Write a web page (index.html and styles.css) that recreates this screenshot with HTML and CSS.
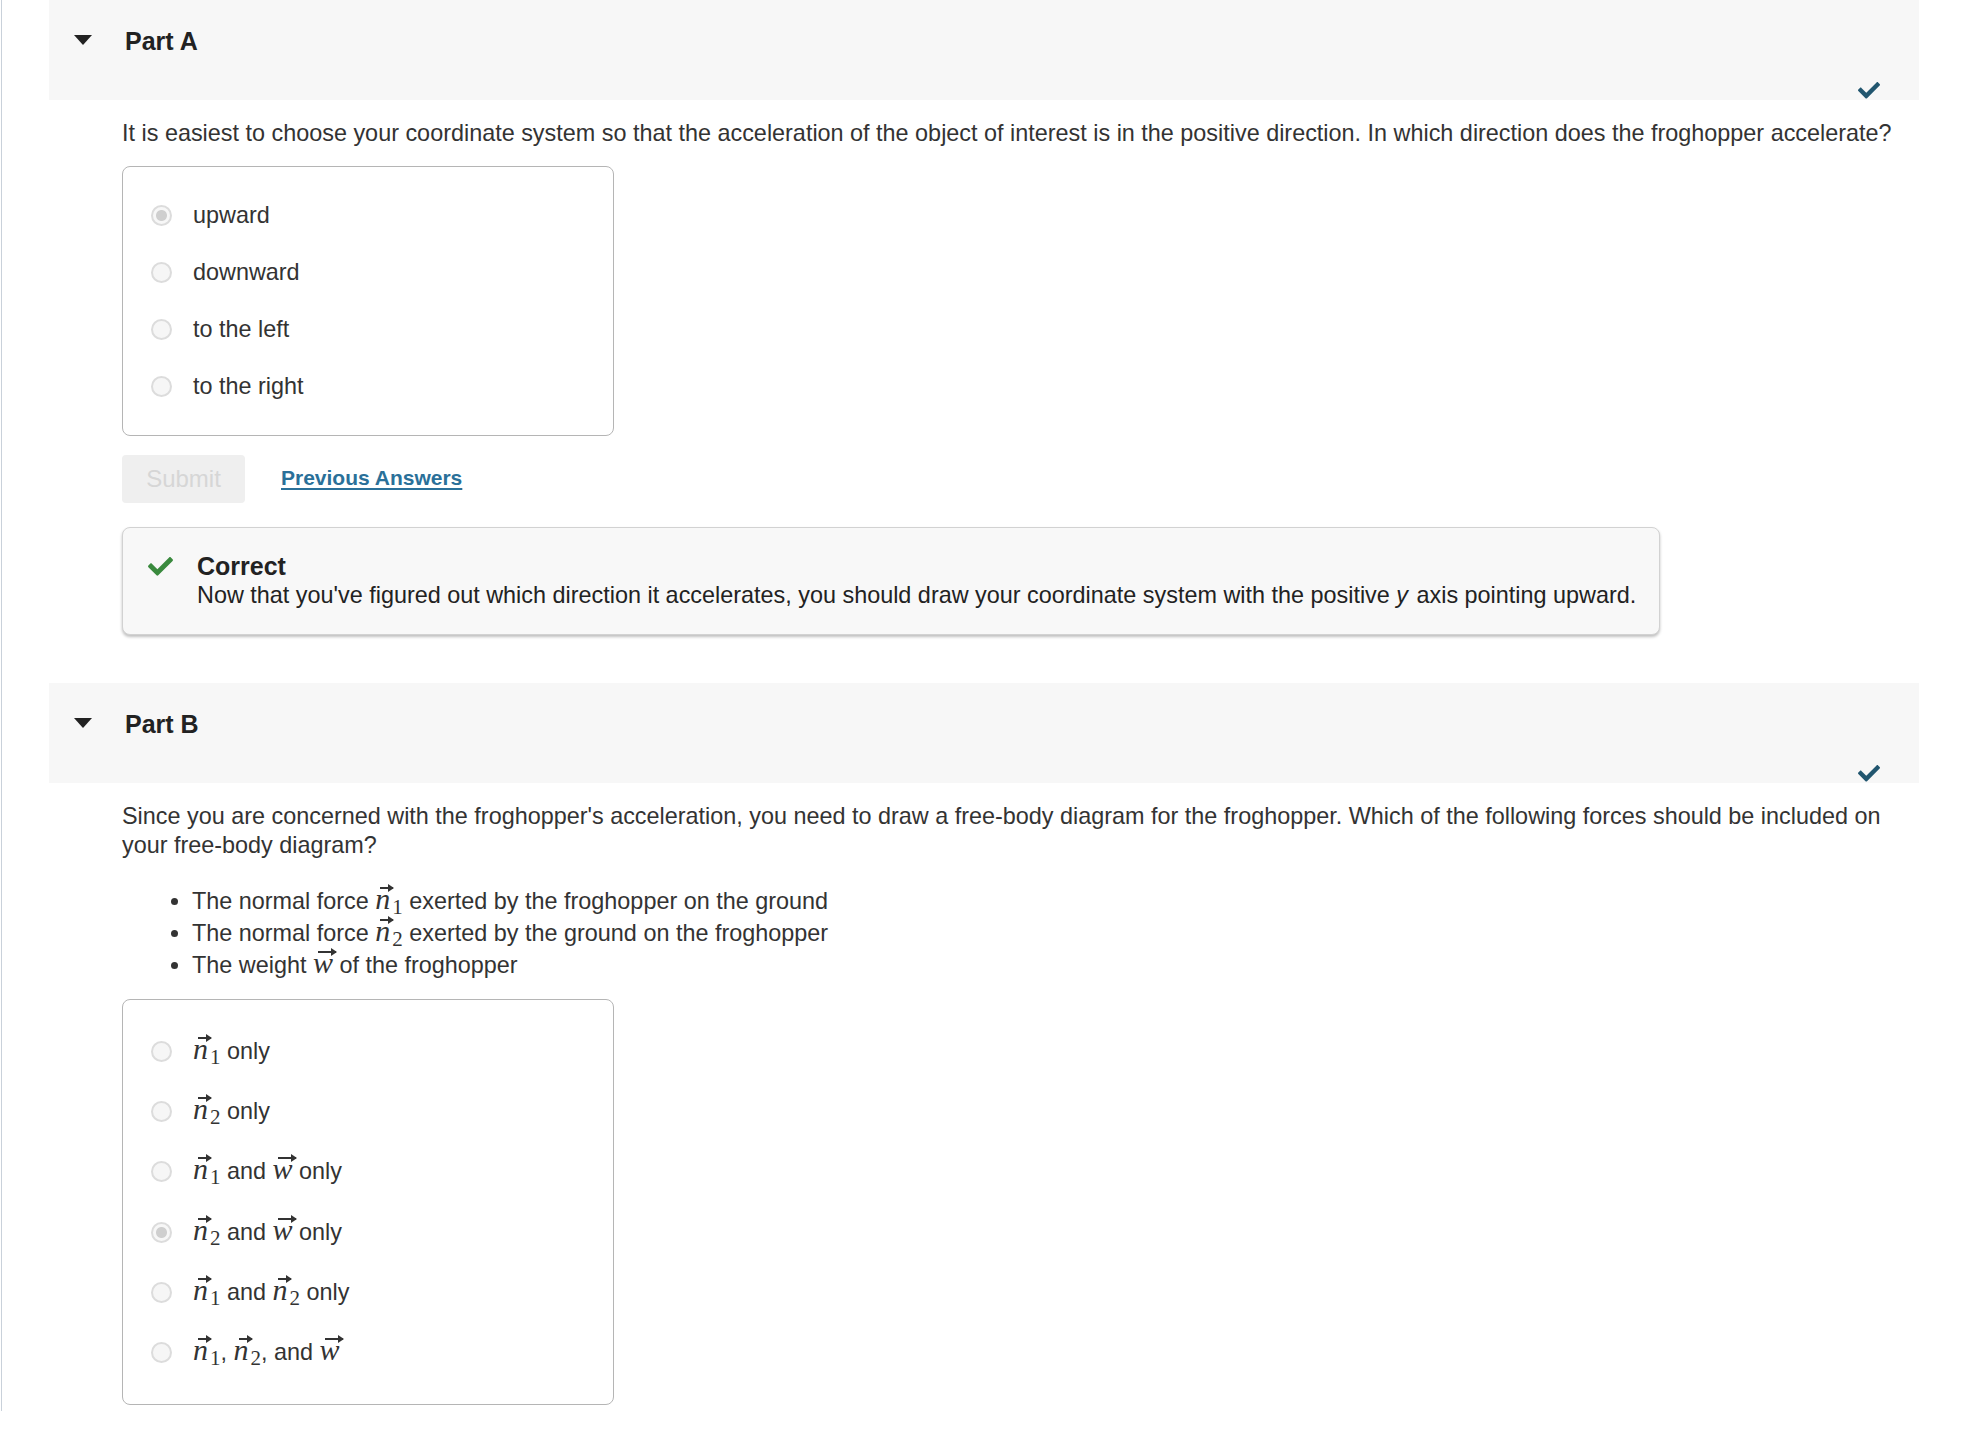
FILE: index.html
```html
<!DOCTYPE html>
<html>
    <head>
        <meta charset="utf-8" />
        <title>Froghopper - Parts A and B</title>
        <meta name="viewport" content="width=device-width, initial-scale=1" />
        <link rel="stylesheet" href="styles.css">
    </head>

    <body>
        <div class="page">
            <section class="part">
                <div class="part-head">
                    <span class="caret"></span>
                    <h2>Part A</h2>
                    <svg class="done" viewBox="0 0 512 400"><path d="M174 390L8 224c-10-10-10-26 0-36l36-36c10-10 26-10 36 0l112 112L432 24c10-10 26-10 36 0l36 36c10 10 10 26 0 36L210 390c-10 10-26 10-36 0z"/></svg>
                </div>
                <div class="part-body">
                    <p class="prompt">It is easiest to choose your coordinate system so that the acceleration of the object of interest is in the positive direction. In which direction does the froghopper accelerate?</p>

                    <div class="choices">
                        <label class="choice"><span class="radio checked"></span><span class="label">upward</span></label>
                        <label class="choice"><span class="radio"></span><span class="label">downward</span></label>
                        <label class="choice"><span class="radio"></span><span class="label">to the left</span></label>
                        <label class="choice"><span class="radio"></span><span class="label">to the right</span></label>
                    </div>

                    <div class="actions">
                        <button class="submit" disabled>Submit</button>
                        <a class="prev" href="#">Previous Answers</a>
                    </div>

                    <div class="feedback">
                        <svg class="ok" viewBox="0 0 512 400"><path d="M174 390L8 224c-10-10-10-26 0-36l36-36c10-10 26-10 36 0l112 112L432 24c10-10 26-10 36 0l36 36c10 10 10 26 0 36L210 390c-10 10-26 10-36 0z"/></svg>
                        <div class="feedback-text">
                            <strong>Correct</strong>
                            <p>Now that you've figured out which direction it accelerates, you should draw your coordinate system with the positive <i class="var">y</i> axis pointing upward.</p>
                        </div>
                    </div>
                </div>
            </section>

            <section class="part part-b">
                <div class="part-head">
                    <span class="caret"></span>
                    <h2>Part B</h2>
                    <svg class="done" viewBox="0 0 512 400"><path d="M174 390L8 224c-10-10-10-26 0-36l36-36c10-10 26-10 36 0l112 112L432 24c10-10 26-10 36 0l36 36c10 10 10 26 0 36L210 390c-10 10-26 10-36 0z"/></svg>
                </div>
                <div class="part-body">
                    <p class="prompt">Since you are concerned with the froghopper's acceleration, you need to draw a free-body diagram for the froghopper. Which of the following forces should be included on your free-body diagram?</p>

                    <ul class="forces">
                        <li>The normal force <span class="vec">n</span><sub class="idx">1</sub> exerted by the froghopper on the ground</li>
                        <li>The normal force <span class="vec">n</span><sub class="idx">2</sub> exerted by the ground on the froghopper</li>
                        <li>The weight <span class="vec">w</span> of the froghopper</li>
                    </ul>

                    <div class="choices tall">
                        <label class="choice"><span class="radio"></span><span class="label"><span class="vec">n</span><sub class="idx">1</sub> only</span></label>
                        <label class="choice"><span class="radio"></span><span class="label"><span class="vec">n</span><sub class="idx">2</sub> only</span></label>
                        <label class="choice"><span class="radio"></span><span class="label"><span class="vec">n</span><sub class="idx">1</sub> and <span class="vec">w</span> only</span></label>
                        <label class="choice"><span class="radio checked"></span><span class="label"><span class="vec">n</span><sub class="idx">2</sub> and <span class="vec">w</span> only</span></label>
                        <label class="choice"><span class="radio"></span><span class="label"><span class="vec">n</span><sub class="idx">1</sub> and <span class="vec">n</span><sub class="idx">2</sub> only</span></label>
                        <label class="choice"><span class="radio"></span><span class="label"><span class="vec">n</span><sub class="idx">1</sub>, <span class="vec">n</span><sub class="idx">2</sub>, and <span class="vec">w</span></span></label>
                    </div>
                </div>
            </section>
        </div>
    </body>
</html>
```

FILE: styles.css
```css
html,
body {
    margin: 0;
    padding: 0;
    background: #fff;
    color: #333;
    font-family: 'Liberation Sans', Arial, sans-serif;
    font-size: 23.4px;
    line-height: 29px;
}

.page {
    margin-left: 1px;
    border-left: 1px solid #c9d1da;
    padding: 0 51px 6px 47px;
}

.part-b {
    margin-top: 48px;
}

.part-head {
    display: flex;
    align-items: flex-start;
    box-sizing: border-box;
    height: 100px;
    padding: 0 39px 0 25px;
    background: #f7f7f7;
}

.caret {
    width: 0;
    height: 0;
    margin-top: 35px;
    border-left: 9px solid transparent;
    border-right: 9px solid transparent;
    border-top: 10px solid #222;
}

.part-head h2 {
    margin: 26px 0 0 33px;
    font-size: 25px;
    line-height: 30px;
    color: #222;
}

.done {
    align-self: flex-end;
    margin: 0 0 1px auto;
    width: 22px;
    height: 18px;
    fill: #21566f;
}

.part-body {
    padding-left: 73px;
}

.prompt {
    margin: 19px 0 0;
}

.choices {
    box-sizing: border-box;
    width: 492px;
    margin-top: 18px;
    padding: 20px 0;
    border: 1px solid #b5b5b5;
    border-radius: 8px;
}

.choice {
    display: flex;
    align-items: center;
    height: 57px;
    padding-left: 28px;
}

.choices.tall {
    margin-top: 18px;
    padding: 21px 0 21px;
}

.choices.tall .choice {
    height: 60.3px;
}

.radio {
    box-sizing: border-box;
    flex: none;
    width: 21px;
    height: 21px;
    margin-right: 21px;
    border: 2px solid #dcdcdc;
    border-radius: 50%;
    background: #f6f6f6;
}

.radio.checked {
    background: radial-gradient(circle, #cfcfcf 0 5px, #f7f7f7 6px);
}

.label {
    white-space: nowrap;
}

.actions {
    display: flex;
    align-items: center;
    margin-top: 19px;
}

.submit {
    width: 123px;
    height: 48px;
    padding: 0;
    border: none;
    border-radius: 4px;
    background: #efefef;
    color: #d6d6d6;
    font-family: inherit;
    font-size: 24px;
}

.prev {
    margin: 0 0 3px 36px;
    color: #2a7099;
    font-size: 21px;
    font-weight: bold;
    text-decoration: underline;
    text-underline-offset: 3px;
}

.feedback {
    display: flex;
    align-items: flex-start;
    box-sizing: border-box;
    width: 1538px;
    margin-top: 24px;
    padding: 23px 8px 24px 25px;
    border: 1px solid #d2d2d2;
    border-radius: 8px;
    background: #f8f8f8;
    box-shadow: 0 2px 3px rgba(0, 0, 0, 0.25);
}

.ok {
    flex: none;
    width: 25px;
    height: 20px;
    margin: 5px 24px 0 0;
    fill: #3a8a3e;
}

.feedback-text strong {
    display: block;
    font-size: 25px;
    line-height: 30px;
    color: #222;
}

.feedback-text p {
    margin: 0;
    color: #222;
}

.var {
    padding-right: 2px;
}

.forces {
    margin: 25px 0 0;
    padding-left: 70px;
    line-height: 32px;
}

.vec {
    position: relative;
    font-family: 'Liberation Serif', 'DejaVu Serif', serif;
    font-style: italic;
    font-size: 30px;
    line-height: 0;
}

.vec::after {
    content: "";
    position: absolute;
    left: 5px;
    right: -3px;
    top: 5px;
    height: 2px;
    background: #333;
}

.vec::before {
    content: "";
    position: absolute;
    right: -4px;
    top: 2px;
    border-left: 6px solid #333;
    border-top: 4px solid transparent;
    border-bottom: 4px solid transparent;
}

.idx {
    font-family: 'Liberation Serif', 'DejaVu Serif', serif;
    font-size: 21px;
    line-height: 0;
    vertical-align: -5px;
    margin-left: 2px;
}
```
